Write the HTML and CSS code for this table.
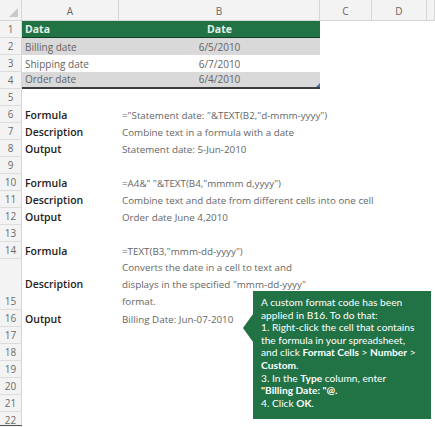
FILE: index.html
```html
<!DOCTYPE html>
<html>
<head>
<meta charset="utf-8">
<link rel="stylesheet" href="styles.css">
</head>
<body>
<div class="sheet">
  <div class="row colhead">
    <div class="corner"><span class="tri"></span></div>
    <div class="ch">A</div>
    <div class="ch">B</div>
    <div class="ch">C</div>
    <div class="ch">D</div>
    <div class="ch"></div>
  </div>

  <div class="row">
    <div class="rh">1</div>
    <div class="c th">Data</div>
    <div class="c th center">Date</div>
  </div>
  <div class="row">
    <div class="rh">2</div>
    <div class="c td band">Billing date</div>
    <div class="c td band center">6/5/2010</div>
  </div>
  <div class="row">
    <div class="rh">3</div>
    <div class="c td">Shipping date</div>
    <div class="c td center">6/7/2010</div>
  </div>
  <div class="row">
    <div class="rh">4</div>
    <div class="c td band last">Order date</div>
    <div class="c td band last center">6/4/2010<span class="handle"></span></div>
  </div>
  <div class="row"><div class="rh">5</div></div>

  <div class="row">
    <div class="rh">6</div>
    <div class="c lbl">Formula</div>
    <div class="c txt">="Statement date: "&amp;TEXT(B2,"d-mmm-yyyy")</div>
  </div>
  <div class="row">
    <div class="rh">7</div>
    <div class="c lbl">Description</div>
    <div class="c txt">Combine text in a formula with a date</div>
  </div>
  <div class="row">
    <div class="rh">8</div>
    <div class="c lbl">Output</div>
    <div class="c txt">Statement date: 5-Jun-2010</div>
  </div>
  <div class="row"><div class="rh">9</div></div>

  <div class="row">
    <div class="rh">10</div>
    <div class="c lbl">Formula</div>
    <div class="c txt">=A4&amp;" "&amp;TEXT(B4,"mmmm d,yyyy")</div>
  </div>
  <div class="row">
    <div class="rh">11</div>
    <div class="c lbl">Description</div>
    <div class="c txt">Combine text and date from different cells into one cell</div>
  </div>
  <div class="row">
    <div class="rh">12</div>
    <div class="c lbl">Output</div>
    <div class="c txt">Order date June 4,2010</div>
  </div>
  <div class="row"><div class="rh">13</div></div>

  <div class="row">
    <div class="rh">14</div>
    <div class="c lbl">Formula</div>
    <div class="c txt">=TEXT(B3,"mmm-dd-yyyy")</div>
  </div>
  <div class="row tall">
    <div class="rh">15</div>
    <div class="c lbl mid">Description</div>
    <div class="c txt multi">Converts the date in a cell to text and<br>displays in the specified "mmm-dd-yyyy"<br>format.</div>
  </div>
  <div class="row">
    <div class="rh">16</div>
    <div class="c lbl">Output</div>
    <div class="c txt">Billing Date: Jun-07-2010</div>
  </div>
  <div class="row"><div class="rh">17</div></div>
  <div class="row"><div class="rh">18</div></div>
  <div class="row"><div class="rh">19</div></div>
  <div class="row"><div class="rh">20</div></div>
  <div class="row"><div class="rh">21</div></div>
  <div class="row"><div class="rh">22</div></div>

  <span class="edge"></span>

  <div class="tip">
    <span class="arrow"></span>
    A custom format code has been<br>
    applied in B16. To do that:<br>
    1. Right-click the cell that contains<br>
    the formula in your spreadsheet,<br>
    and click <b>Format Cells</b> &gt; <b>Number</b> &gt;<br>
    <b>Custom</b>.<br>
    3. In the <b>Type</b> column, enter<br>
    <b>"Billing Date: "@.</b><br>
    4. Click <b>OK</b>.
  </div>
</div>
</body>
</html>
```

FILE: styles.css
```css
html, body {
  margin: 0;
  padding: 0;
  background: #ffffff;
}

.sheet {
  position: relative;
  width: 435px;
  height: 427px;
  overflow: hidden;
  font-family: "Open Sans", "Noto Sans", sans-serif;
}

.row {
  display: grid;
  grid-template-columns: 22px 97px 201px 52px 55px 8px;
  height: 17px;
}

.row.tall {
  height: 51px;
}

.colhead {
  height: 21px;
  background: #f3f3f3;
  border-bottom: 1px solid #d6d6d6;
  box-sizing: border-box;
}

.corner {
  position: relative;
  border-right: 1px solid #d6d6d6;
}

.tri {
  position: absolute;
  right: 3px;
  bottom: 3px;
  width: 0;
  height: 0;
  border-left: 9px solid transparent;
  border-bottom: 9px solid #c9c9c9;
}

.ch {
  border-right: 1px solid #d6d6d6;
  font-size: 10px;
  color: #666666;
  display: flex;
  align-items: center;
  justify-content: center;
  padding-top: 1px;
}

.rh {
  background: #f3f3f3;
  border-right: 1px solid #d6d6d6;
  border-bottom: 1px solid #dcdcdc;
  box-sizing: border-box;
  font-size: 10px;
  color: #6b6b6b;
  display: flex;
  align-items: flex-end;
  justify-content: center;
  line-height: 15px;
}

.edge {
  position: absolute;
  left: 0;
  bottom: 1px;
  width: 22px;
  height: 1px;
  background: #555555;
}

.c {
  padding: 0 3px;
  white-space: nowrap;
  display: flex;
  align-items: flex-end;
  line-height: 15px;
}

.center {
  justify-content: center;
  position: relative;
}

.th {
  background: #217346;
  color: #e4f2e6;
  font-weight: 700;
  font-size: 10.5px;
  border-bottom: 1px solid #113d22;
  box-sizing: border-box;
}

.td {
  color: #636363;
  font-size: 10px;
}

.band {
  background: #d9d9d9;
}

.last {
  border-bottom: 2px solid #3d3d3d;
  box-sizing: border-box;
}

.handle {
  position: absolute;
  right: 0;
  bottom: 0;
  width: 0;
  height: 0;
  border-left: 4px solid transparent;
  border-bottom: 4px solid #4a6fb5;
}

.lbl {
  color: #222222;
  font-weight: 600;
  font-size: 10.5px;
}

.lbl.mid {
  align-items: center;
}

.txt {
  color: #666666;
  font-size: 9.8px;
}

.txt.multi {
  white-space: nowrap;
  line-height: 17px;
  align-items: flex-start;
}

.tip {
  position: absolute;
  left: 253px;
  top: 291px;
  width: 178px;
  height: 128px;
  box-sizing: border-box;
  padding: 5px 0 0 8px;
  background: #217346;
  color: #ffffff;
  font-family: "Lato", "Open Sans", sans-serif;
  font-size: 10.2px;
  line-height: 12.6px;
  white-space: nowrap;
}

.tip b {
  font-weight: 700;
}

.arrow {
  position: absolute;
  left: -10px;
  top: 23px;
  width: 0;
  height: 0;
  border-top: 14px solid transparent;
  border-bottom: 14px solid transparent;
  border-right: 10px solid #217346;
}
```
